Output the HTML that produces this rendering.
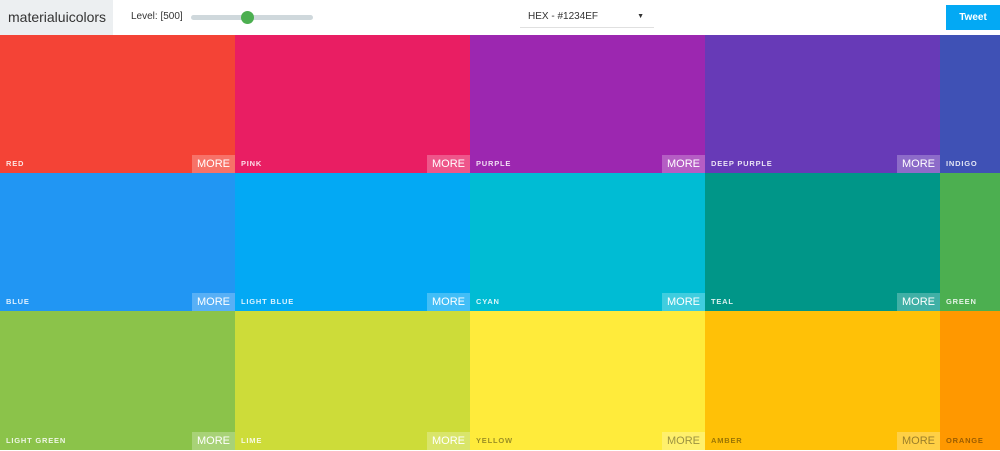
<!DOCTYPE html>
<html><head><style>
*{margin:0;padding:0;box-sizing:border-box}
body{width:1000px;height:450px;overflow:hidden;font-family:"Liberation Sans",sans-serif;background:#fff;position:relative}
.hdr{position:absolute;left:0;top:0;width:1000px;height:35px;background:#fff}
.logo{position:absolute;left:0;top:0;width:113px;height:35px;background:#eceff1;font-size:14px;color:#333;line-height:34px;padding-left:8px}
.lvl{position:absolute;left:131px;top:11px;font-size:10px;color:#333}
.track{position:absolute;left:191px;top:15px;width:122px;height:5px;border-radius:3px;background:#cfd8dc}
.thumb{position:absolute;left:241px;top:11px;width:13px;height:13px;border-radius:50%;background:#4caf50}
.sel{position:absolute;left:520px;top:0;width:134px;height:28px;border-bottom:1px solid #e0e0e0;font-size:10px;color:#333;line-height:33px;padding-left:8px}
.sel span{position:absolute;right:10px;top:0;font-size:7px}
.tw{position:absolute;left:946px;top:5px;width:54px;height:25px;background:#03a9f4;color:#fff;font-size:10px;font-weight:bold;line-height:25px;text-align:center}
.t{position:absolute;width:235px;height:138px}
.t b{position:absolute;left:6px;bottom:5px;font-size:7.5px;letter-spacing:.8px;color:rgba(255,255,255,.85)}
.t i{position:absolute;right:0;bottom:0;width:43px;height:18px;background:rgba(255,255,255,.25);font-style:normal;color:#fff;font-size:11px;line-height:19px;text-align:center}
.d b{color:rgba(0,0,0,.4)}
.d i{color:rgba(0,0,0,.4)}
</style></head><body>
<div class="hdr"><div class="logo">materialuicolors</div><div class="lvl">Level: [500]</div><div class="track"></div><div class="thumb"></div>
<div class="sel">HEX - #1234EF<span>▼</span></div><div class="tw">Tweet</div></div>

<div class="t" style="left:0;top:35px;background:#f44336"><b>RED</b><i>MORE</i></div>
<div class="t" style="left:235px;top:35px;background:#e91e63"><b>PINK</b><i>MORE</i></div>
<div class="t" style="left:470px;top:35px;background:#9c27b0"><b>PURPLE</b><i>MORE</i></div>
<div class="t" style="left:705px;top:35px;background:#673ab7"><b>DEEP PURPLE</b><i>MORE</i></div>
<div class="t" style="left:940px;top:35px;background:#3f51b5"><b>INDIGO</b></div>

<div class="t" style="left:0;top:173px;background:#2196f3"><b>BLUE</b><i>MORE</i></div>
<div class="t" style="left:235px;top:173px;background:#03a9f4"><b>LIGHT BLUE</b><i>MORE</i></div>
<div class="t" style="left:470px;top:173px;background:#00bcd4"><b>CYAN</b><i>MORE</i></div>
<div class="t" style="left:705px;top:173px;background:#009688"><b>TEAL</b><i>MORE</i></div>
<div class="t" style="left:940px;top:173px;background:#4caf50"><b>GREEN</b></div>

<div class="t" style="left:0;top:311px;height:139px;background:#8bc34a"><b>LIGHT GREEN</b><i>MORE</i></div>
<div class="t" style="left:235px;top:311px;height:139px;background:#cddc39"><b>LIME</b><i>MORE</i></div>
<div class="t d" style="left:470px;top:311px;height:139px;background:#ffeb3b"><b>YELLOW</b><i>MORE</i></div>
<div class="t d" style="left:705px;top:311px;height:139px;background:#ffc107"><b>AMBER</b><i>MORE</i></div>
<div class="t d" style="left:940px;top:311px;height:139px;background:#ff9800"><b>ORANGE</b></div>
</body></html>
